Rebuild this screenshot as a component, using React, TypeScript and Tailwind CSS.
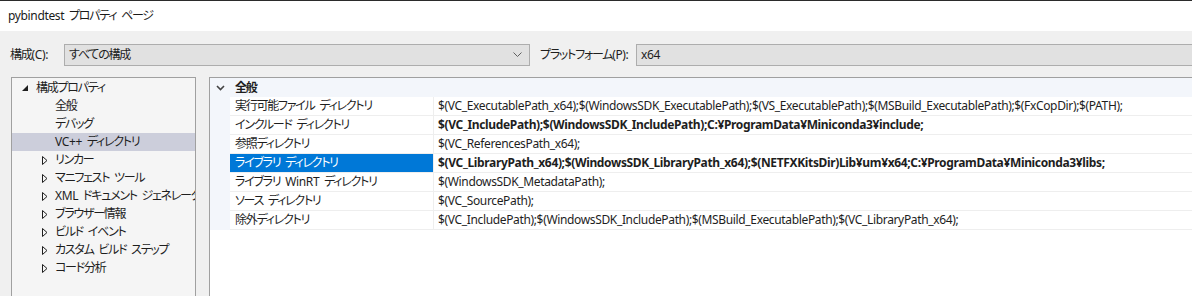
import React from "react";

const font = { fontFamily: '"Noto Sans", "Noto Sans CJK JP", sans-serif' };

// Japanese runs are set a little tighter so they take the width of the UI font
function J({ text }: { text: string }) {
  const parts = text.split(/([\u3000-\u30ff\u4e00-\u9fff\uff00-\uffef]+)/);
  return (
    <>
      {parts.map((s, i) =>
        i % 2 === 1 ? (
          <span key={i} className="tracking-[-1.25px]">
            {s}
          </span>
        ) : (
          s
        )
      )}
    </>
  );
}

type TreeItem = { label: string; depth: 0 | 1; arrow?: "open" | "closed"; selected?: boolean };

const tree: TreeItem[] = [
  { label: "構成プロパティ", depth: 0, arrow: "open" },
  { label: "全般", depth: 1 },
  { label: "デバッグ", depth: 1 },
  { label: "VC++ ディレクトリ", depth: 1, selected: true },
  { label: "リンカー", depth: 1, arrow: "closed" },
  { label: "マニフェスト ツール", depth: 1, arrow: "closed" },
  { label: "XML ドキュメント ジェネレーター", depth: 1, arrow: "closed" },
  { label: "ブラウザー情報", depth: 1, arrow: "closed" },
  { label: "ビルド イベント", depth: 1, arrow: "closed" },
  { label: "カスタム ビルド ステップ", depth: 1, arrow: "closed" },
  { label: "コード分析", depth: 1, arrow: "closed" },
];

type Prop = { name: string; value: string; bold?: boolean; selected?: boolean };

const props: Prop[] = [
  {
    name: "実行可能ファイル ディレクトリ",
    value:
      "$(VC_ExecutablePath_x64);$(WindowsSDK_ExecutablePath);$(VS_ExecutablePath);$(MSBuild_ExecutablePath);$(FxCopDir);$(PATH);",
  },
  {
    name: "インクルード ディレクトリ",
    value: "$(VC_IncludePath);$(WindowsSDK_IncludePath);C:¥ProgramData¥Miniconda3¥include;",
    bold: true,
  },
  { name: "参照ディレクトリ", value: "$(VC_ReferencesPath_x64);" },
  {
    name: "ライブラリ ディレクトリ",
    value:
      "$(VC_LibraryPath_x64);$(WindowsSDK_LibraryPath_x64);$(NETFXKitsDir)Lib¥um¥x64;C:¥ProgramData¥Miniconda3¥libs;",
    bold: true,
    selected: true,
  },
  { name: "ライブラリ WinRT ディレクトリ", value: "$(WindowsSDK_MetadataPath);" },
  { name: "ソース ディレクトリ", value: "$(VC_SourcePath);" },
  {
    name: "除外ディレクトリ",
    value: "$(VC_IncludePath);$(WindowsSDK_IncludePath);$(MSBuild_ExecutablePath);$(VC_LibraryPath_x64);",
  },
];

function Chevron() {
  return (
    <svg width="9" height="6" viewBox="0 0 9 6" fill="none" stroke="#606060" strokeWidth="1">
      <path d="M0.5 0.5 L4.5 4.5 L8.5 0.5" />
    </svg>
  );
}

export default function App() {
  return (
    <div
      className="w-[1192px] h-[296px] overflow-hidden bg-[#f0f0f0] text-[12px] tracking-[-0.35px] [word-spacing:2px] [font-feature-settings:'palt'] text-[#1e1e1e] flex flex-col"
      style={font}
    >
      {/* title bar */}
      <div className="h-[31px] shrink-0 bg-white border-t border-[#2b2b2b] flex items-center pl-[8px] text-[#1a1a1a] whitespace-nowrap">
        <span>
          <J text="pybindtest プロパティ ページ" />
        </span>
      </div>

      {/* configuration row */}
      <div className="flex items-center h-[22px] mt-[13px] shrink-0 whitespace-nowrap">
        <span className="w-[64px] pl-[10px] shrink-0">
          <J text="構成(C):" />
        </span>
        <div className="w-[466px] h-[22px] shrink-0 bg-[#e1e1e1] border border-[#adadad] flex items-center pl-[4px] pr-[7px] justify-between">
          <span>
            <J text="すべての構成" />
          </span>
          <Chevron />
        </div>
        <span className="w-[106px] pl-[10px] shrink-0">
          <J text="プラットフォーム(P):" />
        </span>
        <div className="flex-1 h-[22px] bg-[#e1e1e1] border border-[#adadad] border-r-0 flex items-center pl-[4px] min-w-0">
          <span>x64</span>
        </div>
      </div>

      {/* panels */}
      <div className="flex mt-[11px] flex-1 min-h-0">
        {/* tree */}
        <div className="ml-[11px] w-[185px] shrink-0 bg-[#f5f5f5] border border-[#a0a0a0] border-b-0 pt-px overflow-hidden">
          {tree.map((t) => (
            <div
              key={t.label}
              className={`h-[18px] flex items-center whitespace-nowrap ${t.selected ? "bg-[#cccedb]" : ""}`}
            >
              {t.depth === 0 ? (
                <span className="w-[24px] pl-[10px] shrink-0 flex items-center">
                  <svg width="6" height="6" viewBox="0 0 6 6">
                    <path d="M6 0 L6 6 L0 6 Z" fill="#1e1e1e" />
                  </svg>
                </span>
              ) : (
                <span className="w-[43px] pl-[30px] shrink-0 flex items-center">
                  {t.arrow === "closed" && (
                    <svg width="6" height="9" viewBox="0 0 6 9" fill="none" stroke="#1e1e1e" strokeWidth="1">
                      <path d="M0.5 0.5 L5 4.5 L0.5 8.5 Z" />
                    </svg>
                  )}
                </span>
              )}
              <span>
                <J text={t.label} />
              </span>
            </div>
          ))}
        </div>

        {/* property grid */}
        <div className="ml-[13px] flex-1 min-w-0 bg-white border-t border-l border-[#a0a0a0] overflow-hidden">
          <div className="h-[19px] bg-[#f3f6fb] flex items-center">
            <span className="w-[20px] pl-[6px] shrink-0 flex items-center">
              <svg width="9" height="6" viewBox="0 0 9 6" fill="none" stroke="#444" strokeWidth="1.6">
                <path d="M1 1 L4.5 4.5 L8 1" />
              </svg>
            </span>
            <span className="pl-[5px] font-bold">
              <J text="全般" />
            </span>
          </div>
          {props.map((p) => (
            <div key={p.name} className="flex h-[19px]">
              <div className="w-[20px] shrink-0 bg-[#f3f6fb]" />
              <div
                className={`w-[204px] shrink-0 flex items-center pl-[5px] border-b border-r border-[#eeeeee] whitespace-nowrap ${
                  p.selected ? "bg-[#0078d7] text-white" : ""
                }`}
              >
                <span>
                  <J text={p.name} />
                </span>
              </div>
              <div
                className={`flex-1 min-w-0 flex items-center pl-[4px] border-b border-[#eeeeee] whitespace-nowrap ${
                  p.bold ? "font-bold" : ""
                }`}
              >
                {p.value}
              </div>
            </div>
          ))}
        </div>
      </div>
    </div>
  );
}
